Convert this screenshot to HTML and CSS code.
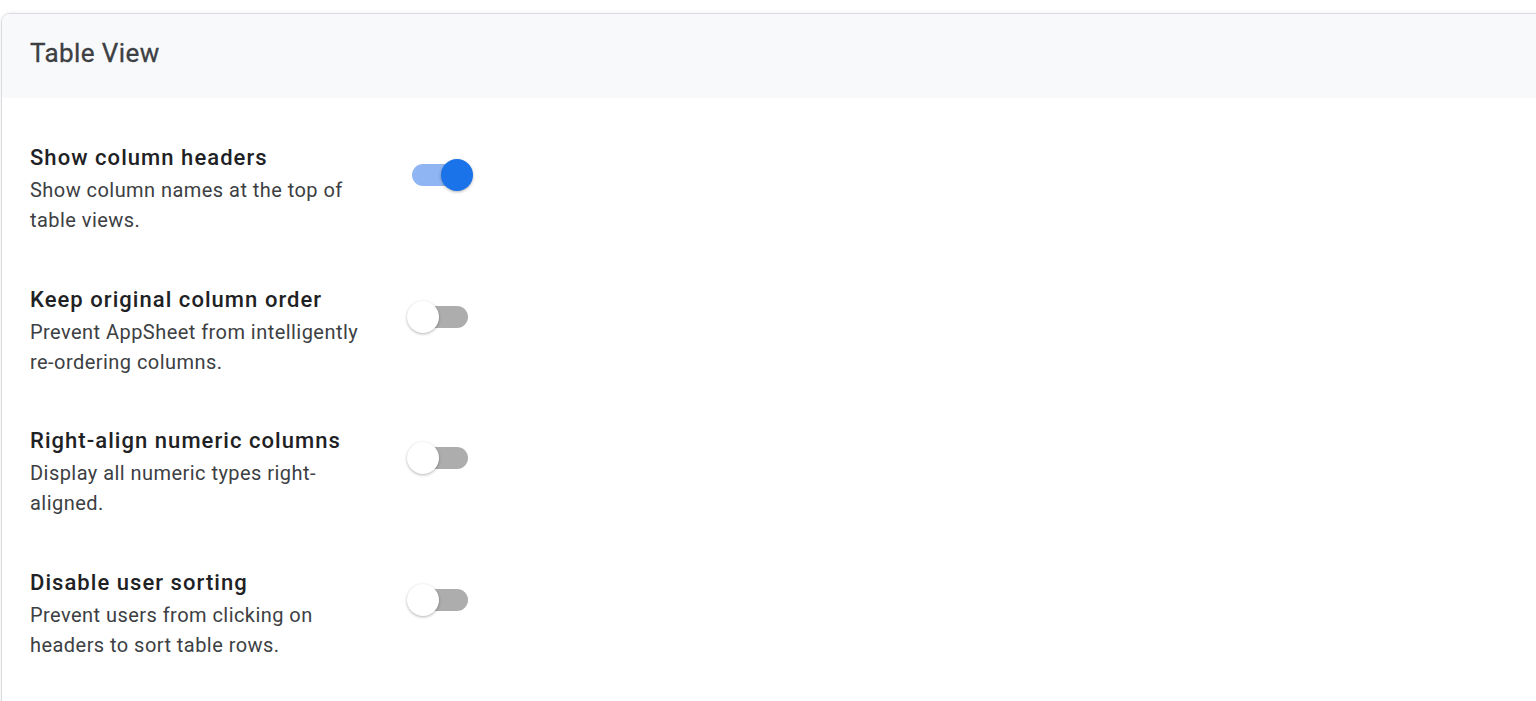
FILE: index.html
```html
<!DOCTYPE html>
<html lang="en">
<head>
    <meta charset="UTF-8">
    <meta name="viewport" content="width=device-width, initial-scale=1.0">
    <title>Table View</title>
    <link rel="stylesheet" href="styles.css">
</head>
<body>
    <div class="card">
        <div class="card-header">
            <h2>Table View</h2>
        </div>
        <div class="card-body">
            <div class="setting">
                <div class="setting-text">
                    <div class="setting-title">Show column headers</div>
                    <div class="setting-desc">Show column names at the top of table views.</div>
                </div>
                <label class="switch on"><span class="track"></span><span class="thumb"></span></label>
            </div>
            <div class="setting">
                <div class="setting-text">
                    <div class="setting-title">Keep original column order</div>
                    <div class="setting-desc">Prevent AppSheet from intelligently re-ordering columns.</div>
                </div>
                <label class="switch"><span class="track"></span><span class="thumb"></span></label>
            </div>
            <div class="setting">
                <div class="setting-text">
                    <div class="setting-title">Right-align numeric columns</div>
                    <div class="setting-desc">Display all numeric types right-aligned.</div>
                </div>
                <label class="switch"><span class="track"></span><span class="thumb"></span></label>
            </div>
            <div class="setting">
                <div class="setting-text">
                    <div class="setting-title">Disable user sorting</div>
                    <div class="setting-desc">Prevent users from clicking on headers to sort table rows.</div>
                </div>
                <label class="switch"><span class="track"></span><span class="thumb"></span></label>
            </div>
        </div>
    </div>
</body>
</html>
```

FILE: styles.css
```css
body {
    margin: 0;
    padding: 13px 0 0 1px;
    font-family: Roboto, "Liberation Sans", sans-serif;
    background-color: #fff;
    overflow: hidden;
    height: 701px;
    box-sizing: border-box;
}
.card {
    margin-right: -20px;
    height: 760px;
    border: 1px solid #dadce0;
    border-radius: 9px;
    box-shadow: 0 0 4px rgba(0, 0, 0, 0.08);
    overflow: hidden;
}
.card-header {
    background-color: #f8f9fa;
    height: 84px;
    box-sizing: border-box;
    padding: 0 0 6px 28px;
    display: flex;
    align-items: center;
}
.card-header h2 {
    margin: 0;
    font-size: 26px;
    font-weight: 400;
    color: #3c4043;
    letter-spacing: 0.4px;
    -webkit-text-stroke: 0.3px #3c4043;
}
.card-body {
    padding: 45px 0 0 28px;
}
.setting {
    display: flex;
    align-items: flex-start;
    margin-bottom: 49.5px;
}
.setting-text {
    width: 340px;
}
.setting-title {
    font-size: 22px;
    font-weight: 500;
    line-height: 30px;
    color: #202124;
    letter-spacing: 1.05px;
}
.setting-desc {
    margin-top: 2px;
    font-size: 20px;
    line-height: 30px;
    color: #3c4043;
    letter-spacing: 0.45px;
}
.switch {
    position: relative;
    width: 66px;
    height: 34px;
    margin-left: 37px;
    margin-top: 15px;
    cursor: pointer;
}
.switch .track {
    position: absolute;
    left: 3px;
    top: 6px;
    width: 58px;
    height: 22px;
    border-radius: 11px;
    background-color: #adadad;
}
.switch .thumb {
    position: absolute;
    left: 0;
    top: 1px;
    width: 32px;
    height: 32px;
    border-radius: 50%;
    background-color: #fff;
    box-shadow: 0 1px 3px rgba(0, 0, 0, 0.3);
}
.switch.on .track {
    left: 5px;
    background-color: #8fb5f3;
}
.switch.on .thumb {
    left: 34px;
    background-color: #1a73e8;
}
```
